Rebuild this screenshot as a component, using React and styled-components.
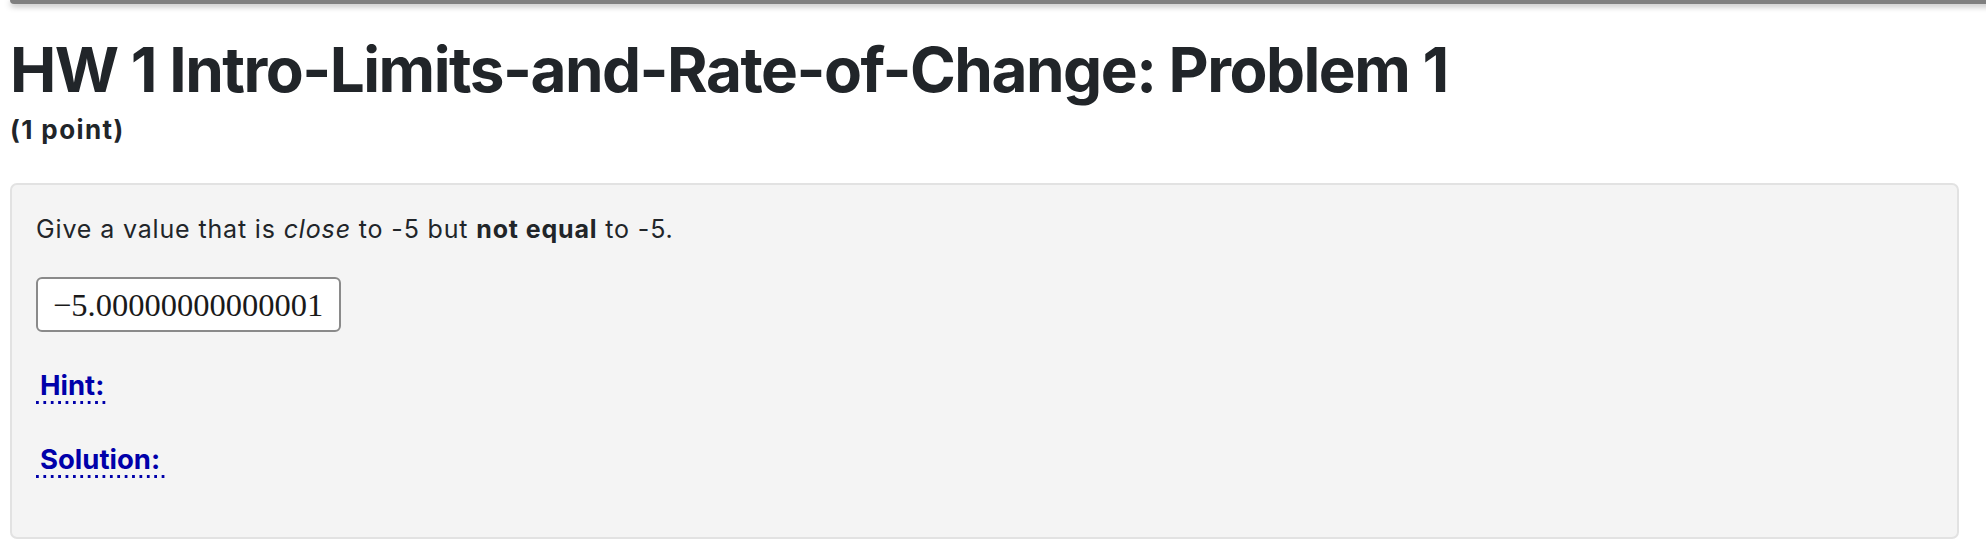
import styled, { createGlobalStyle } from 'styled-components';

const GlobalStyle = createGlobalStyle`
  html, body {
    margin: 0;
    padding: 0;
    background: #fff;
  }
  body {
    font-family: Inter, "Noto Sans", "Liberation Sans", sans-serif;
    color: #212529;
  }
`;

const Page = styled.div`
  width: 100%;
  min-height: 544px;
  box-sizing: border-box;
  padding: 0 27px 0 10px;
  overflow: hidden;
`;

const TopBar = styled.div`
  height: 4px;
  margin-right: -40px;
  background: #808080;
  border-bottom-left-radius: 5px;
  box-shadow: 0 2px 6px rgba(0, 0, 0, 0.35);
`;

const Title = styled.h1`
  margin: 28px 0 0;
  font-size: 62px;
  line-height: 76px;
  font-weight: 700;
  letter-spacing: -1.5px;
  color: #212529;
`;

const Points = styled.div`
  margin-top: 7px;
  font-size: 26px;
  line-height: 30px;
  font-weight: 700;
  letter-spacing: 1.4px;
`;

const ProblemBox = styled.div`
  margin-top: 38px;
  box-sizing: border-box;
  height: 356px;
  padding: 26px 24px 0;
  background: #f4f4f4;
  border: 2px solid #e2e2e2;
  border-radius: 7px;
`;

const Statement = styled.p`
  margin: 0;
  font-size: 25px;
  line-height: 36px;
  letter-spacing: 0.85px;

  em {
    font-style: italic;
  }
  strong {
    font-weight: 700;
  }
`;

const AnswerField = styled.div`
  display: inline-block;
  margin-top: 30px;
  box-sizing: border-box;
  height: 55px;
  padding: 2px 16px 0 15px;
  background: #fff;
  border: 2px solid #8a8a8a;
  border-radius: 6px;
  font-family: "Liberation Serif", "DejaVu Serif", serif;
  font-size: 32.5px;
  line-height: 49px;
  color: #1a1a1a;
`;

const Toggles = styled.div`
  display: flex;
  flex-direction: column;
  align-items: flex-start;
  gap: 42px;
  margin-top: 40px;
`;

const Toggle = styled.a`
  display: inline-block;
  padding: 0 5px 5px 4px;
  font-size: 27.5px;
  line-height: 27px;
  font-weight: 700;
  color: #0000aa;
  text-decoration: none;
  cursor: pointer;
  background-image: linear-gradient(to right, #0000aa 3px, transparent 3px);
  background-size: 7.4px 3px;
  background-repeat: repeat-x;
  background-position: left bottom;
`;

export default function App() {
  return (
    <>
      <GlobalStyle />
      <Page>
        <TopBar />
        <Title>HW 1 Intro-Limits-and-Rate-of-Change: Problem 1</Title>
        <Points>(1 point)</Points>
        <ProblemBox>
          <Statement>
            Give a value that is <em>close</em> to -5 but <strong>not equal</strong> to -5.
          </Statement>
          <AnswerField>−5.00000000000001</AnswerField>
          <Toggles>
            <Toggle>Hint:</Toggle>
            <Toggle>Solution:</Toggle>
          </Toggles>
        </ProblemBox>
      </Page>
    </>
  );
}
